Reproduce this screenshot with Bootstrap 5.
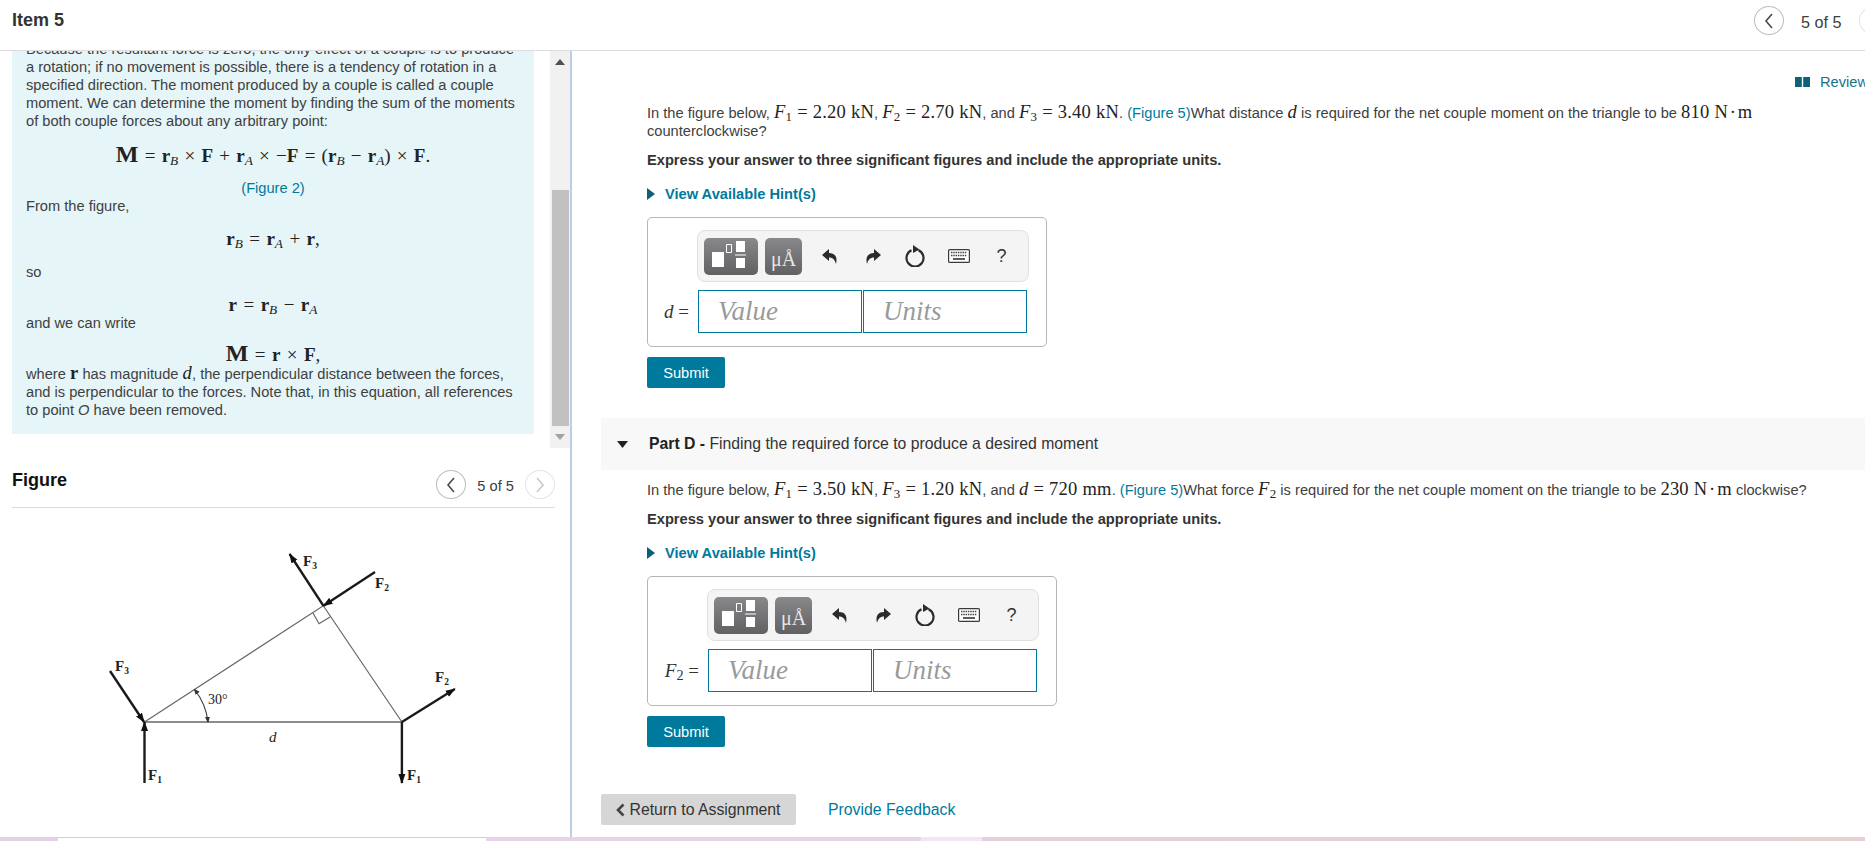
<!DOCTYPE html>
<html lang="en">
<head>
<meta charset="utf-8">
<title>Item 5</title>
<link href="https://cdn.jsdelivr.net/npm/bootstrap@5.3.0/dist/css/bootstrap.min.css" rel="stylesheet">
<style>
:root{--teal:#007a9c;}
html,body{height:100%;overflow:hidden;background:#fff;}
body{font-family:"Liberation Sans",Arial,sans-serif;font-size:14.65px;line-height:18px;color:#404040;}
a{color:var(--teal);text-decoration:none;}
.app-frame{width:1865px;height:841px;overflow:hidden;}
.top-bar{height:51px;border-bottom:1px solid #dcdcdc;padding-left:12px;}
.item-title{font-size:18px;font-weight:700;color:#333;line-height:40px;}
.pager-wrap{width:111px;padding-top:6px;flex:none;overflow:hidden;}
.round-btn{width:30px;height:29px;border:1px solid #bdbdbd;border-radius:50%;background:#fff;padding:0;display:flex;align-items:center;justify-content:center;flex:none;}
.round-btn.off{border-color:#e4e4e4;}
.count-main{font-size:16.2px;line-height:24px;margin:0 17px;white-space:nowrap;flex:none;}
.count-fig{font-size:14.65px;line-height:24px;margin:0 11px;white-space:nowrap;flex:none;}
.main-area{height:786px;}
.left-pane{width:572px;flex:none;border-right:2px solid #bccfe2;}
.scroll-area{height:397px;overflow:hidden;}
.scroll-content{width:550px;padding-left:12px;flex:none;}
.hint-box{width:522px;background:#e6f5f7;padding:0 14px 15px;margin-top:-11px;}
.hint-box p{margin:0;}
.eq{font-family:"Liberation Serif",serif;font-size:19px;word-spacing:1.700px;color:#222;display:flex;justify-content:center;white-space:nowrap;}
.eq-tall{height:49px;align-items:center;}
.eq-mid{height:48px;align-items:center;}
.eq-low{height:33px;align-items:flex-end;}
.eq-short{height:32px;align-items:flex-end;}
.eq-big{word-spacing:1.500px;}
.big-m{font-size:24px;font-weight:700;line-height:18px;}
.math{font-family:"Liberation Serif",serif;font-size:18.5px;line-height:1;word-spacing:.2px;letter-spacing:.2px;color:#222;white-space:nowrap;}
.math sub,.eq sub{font-size:70%;bottom:-.25em;}
.bar-track{width:20px;background:#f1f1f1;flex:none;}
.bar-end{height:22px;display:flex;align-items:center;justify-content:center;}
.bar-thumb{height:236px;background:#c1c1c1;margin:0 1px 0 2px;}
.fig-head{margin:18px 15px 0 12px;height:42px;border-bottom:1px solid #dcdcdc;}
.fig-title{font-size:18px;font-weight:700;color:#111;line-height:28px;}
.fig-svg{display:block;width:570px;height:329px;}
.fig-svg text{font-family:"Liberation Serif",serif;fill:#222;}
.right-pane{width:1293px;flex:none;overflow:hidden;}
.review-row{height:42px;padding:22px 0 0 1223px;width:1293px;}
.review-link{display:flex;gap:10px;align-items:center;color:#17708c;white-space:nowrap;width:100px;}
.q-block{padding-left:75px;width:1290px;}
.q-text{margin:10px 0 0;width:1210px;}
.q-bold{font-weight:700;color:#333;margin:11px 0 0;}
.hint-link{font-weight:700;display:flex;align-items:center;gap:10px;margin-top:16px;height:18px;color:var(--teal);}
.answer-card{border:1px solid #b5b5b5;border-radius:5px;background:#fff;margin-top:14px;height:130px;padding-top:12px;}
.card-a{width:400px;}
.card-b{width:410px;}
.tool-strip{height:52px;width:332px;background:#f4f4f4;border:1px solid #e0e0e0;border-radius:8px;display:flex;align-items:center;padding-left:6px;}
.card-a .tool-strip{margin-left:49px;}
.card-b .tool-strip{margin-left:59px;}
.tmpl-btn{height:37px;width:54px;border-radius:5px;background:linear-gradient(#88888b,#616164);display:flex;align-items:center;justify-content:center;flex:none;border:0;padding:0;}
.mu-btn{width:37px;margin:0 6px 0 7px;}
.mu-text{font-family:"Liberation Serif",serif;color:#e6e6e6;font-size:20px;line-height:1;padding-top:5px;}
.tool-icon{width:43px;display:flex;justify-content:center;align-items:center;flex:none;}
.tool-q{font-size:18px;color:#333;}
.entry-row{margin-top:8px;display:flex;align-items:center;}
.entry-label{font-family:"Liberation Serif",serif;font-size:19px;color:#333;text-align:right;flex:none;padding-right:9px;white-space:nowrap;}
.card-a .entry-label{width:50px;}
.card-b .entry-label{width:60px;}
.entry-box.form-control{width:164px;height:43px;border:1px solid var(--teal);border-radius:0;margin-right:1px;padding:0 0 0 19px;font-family:"Liberation Serif",serif;font-style:italic;font-size:27px;flex:none;}
.entry-box.form-control::placeholder{color:#9a9a9a;opacity:1;}
.send-btn{background:var(--teal);color:#fff;border:0;border-radius:2px;width:78px;height:31px;font-size:14.65px;padding:0;margin-top:10px;display:block;}
.part-head{height:52px;background:#f8f8f8;margin:30px 0 0 29px;padding-left:16px;gap:21px;font-size:15.75px;color:#333;width:1264px;}
.part-head b{color:#222;}
.foot-row{margin:47px 0 0 29px;gap:32px;}
.return-btn{width:195px;height:31px;background:#d6d6d6;color:#333;border-radius:2px;display:flex;align-items:center;justify-content:center;gap:4px;font-size:15.8px;}
.foot-link{font-size:15.8px;}
.bottom-strip{height:4px;display:flex;}
.strip-a{width:58px;background:#e3d2e6;}
.strip-b{width:428px;background:#fff;border-top:1px solid #cfcfcf;}
.strip-c{width:435px;background:#e6d3e8;}
.strip-d{width:61px;background:#f3e6f0;}
.strip-e{flex:1;background:linear-gradient(90deg,#e4d0dc,#e8d0d2);}
</style>
</head>
<body>
<div class="app-frame d-flex flex-column">
  <header class="top-bar d-flex justify-content-between">
    <div class="item-title">Item 5</div>
    <div class="pager-wrap d-flex align-items-start">
      <button class="round-btn" aria-label="Previous"><svg width="10" height="16" viewBox="0 0 10 16"><path d="M8 1 2 8l6 7" fill="none" stroke="#4a4a4a" stroke-width="1.6"/></svg></button>
      <span class="count-main mt-1">5 of 5</span>
      <button class="round-btn off" aria-label="Next"></button>
    </div>
  </header>
  <div class="main-area d-flex">
    <aside class="left-pane">
      <div class="scroll-area d-flex">
        <div class="scroll-content">
          <div class="hint-box">
            <p>Because the resultant force is zero, the only effect of a couple is to produce a rotation; if no movement is possible, there is a tendency of rotation in a specified direction. The moment produced by a couple is called a couple moment. We can determine the moment by finding the sum of the moments of both couple forces about any arbitrary point:</p>
            <div class="eq eq-big eq-tall"><span><span class="big-m">M</span> = <b>r</b><sub><i>B</i></sub> × <b>F</b> + <b>r</b><sub><i>A</i></sub> × −<b>F</b> = (<b>r</b><sub><i>B</i></sub> − <b>r</b><sub><i>A</i></sub>) × <b>F</b>.</span></div>
            <p class="text-center"><a href="#">(Figure 2)</a></p>
            <p>From the figure,</p>
            <div class="eq eq-mid"><span><b>r</b><sub><i>B</i></sub> = <b>r</b><sub><i>A</i></sub> + <b>r</b>,</span></div>
            <p>so</p>
            <div class="eq eq-low"><span><b>r</b> = <b>r</b><sub><i>B</i></sub> − <b>r</b><sub><i>A</i></sub></span></div>
            <p>and we can write</p>
            <div class="eq eq-short"><span><span class="big-m">M</span> = <b>r</b> × <b>F</b>,</span></div>
            <p>where <b class="math">r</b> has magnitude <i class="math">d</i>, the perpendicular distance between the forces, and is perpendicular to the forces. Note that, in this equation, all references to point <i>O</i> have been removed.</p>
          </div>
        </div>
        <div class="bar-track d-flex flex-column">
          <div class="bar-end"><svg width="10" height="6" viewBox="0 0 10 6"><path d="M5 0l5 6H0z" fill="#505050"/></svg></div>
          <div class="flex-grow-1"></div>
          <div class="bar-thumb"></div>
          <div class="bar-end"><svg width="10" height="6" viewBox="0 0 10 6"><path d="M5 6 0 0h10z" fill="#a3a3a3"/></svg></div>
        </div>
      </div>
      <div class="fig-head d-flex justify-content-between">
        <div class="fig-title">Figure</div>
        <div class="d-flex align-items-start pt-1">
          <button class="round-btn" aria-label="Previous figure"><svg width="10" height="16" viewBox="0 0 10 16"><path d="M8 1 2 8l6 7" fill="none" stroke="#4a4a4a" stroke-width="1.6"/></svg></button>
          <span class="count-fig mt-1">5 of 5</span>
          <button class="round-btn off" aria-label="Next figure"><svg width="10" height="16" viewBox="0 0 10 16"><path d="M2 1l6 7-6 7" fill="none" stroke="#c8c8c8" stroke-width="1.6"/></svg></button>
        </div>
      </div>
      <svg class="fig-svg" viewBox="0 508 570 329" role="img" aria-label="Triangle with couple forces">
        <defs>
          <marker id="tip" markerWidth="10" markerHeight="8" refX="9" refY="4" orient="auto" markerUnits="userSpaceOnUse"><path d="M0 .5 10 4 0 7.5z" fill="#111"/></marker>
          <marker id="tip2" markerWidth="6" markerHeight="6" refX="5" refY="3" orient="auto-start-reverse" markerUnits="userSpaceOnUse"><path d="M0 .5 6 3 0 5.5z" fill="#333"/></marker>
        </defs>
        <g fill="none" stroke="#666" stroke-width="1.2">
          <path d="M144.5 722 323.3 605.7 401.9 722"/>
          <path d="M144.5 722H401.9" stroke-width="1.7"/>
          <path d="M313 613 319 623.7 330 617"/>
          <path d="M194.5 689.5Q206 704 208 722" stroke="#444" marker-start="url(#tip2)" marker-end="url(#tip2)"/>
        </g>
        <g fill="none" stroke="#1a1a1a" stroke-width="2.4">
          <path d="M144.5 783V722" marker-end="url(#tip)"/>
          <path d="M401.9 722V783" marker-end="url(#tip)"/>
          <path d="M110 671 144 722" marker-end="url(#tip)"/>
          <path d="M323.3 605.7 289.6 554" marker-end="url(#tip)"/>
          <path d="M375 572 323.5 605.7" marker-end="url(#tip)"/>
          <path d="M401.9 722 454.8 689" marker-end="url(#tip)"/>
        </g>
        <g font-size="15">
          <text x="115" y="671" font-weight="700">F<tspan font-size="9.5" dy="3">3</tspan></text>
          <text x="303" y="566" font-weight="700">F<tspan font-size="9.5" dy="3">3</tspan></text>
          <text x="375" y="588" font-weight="700">F<tspan font-size="9.5" dy="3">2</tspan></text>
          <text x="435" y="682" font-weight="700">F<tspan font-size="9.5" dy="3">2</tspan></text>
          <text x="148" y="780" font-weight="700">F<tspan font-size="9.5" dy="3">1</tspan></text>
          <text x="407" y="780" font-weight="700">F<tspan font-size="9.5" dy="3">1</tspan></text>
          <text x="208" y="704" font-size="14">30°</text>
          <text x="269" y="742" font-style="italic">d</text>
        </g>
      </svg>
    </aside>
    <main class="right-pane">
      <div class="review-row"><a href="#" class="review-link"><svg width="15" height="10" viewBox="0 0 15 10"><path d="M0 0h6.8v10H0zM8.2 0H15v10H8.2z" fill="#0f6178"/></svg>Review</a></div>
      <div class="q-block">
        <p class="q-text">In the figure below, <span class="math"><i>F</i><sub>1</sub> = 2.20 kN</span>, <span class="math"><i>F</i><sub>2</sub> = 2.70 kN</span>, and <span class="math"><i>F</i><sub>3</sub> = 3.40 kN</span>. <a href="#">(Figure 5)</a>What distance <i class="math">d</i> is required for the net couple moment on the triangle to be <span class="math">810 N&#8202;·&#8202;m</span> counterclockwise?</p>
        <p class="q-bold">Express your answer to three significant figures and include the appropriate units.</p>
        <a href="#" class="hint-link"><svg width="8" height="12" viewBox="0 0 8 12"><path d="M0 0l8 6-8 6z" fill="#0a5f79"/></svg>View Available Hint(s)</a>
        <div class="answer-card card-a">
          <div class="tool-strip">
            <button class="tmpl-btn" aria-label="Templates"><svg width="54" height="37" viewBox="0 0 54 37"><path d="M8 14h12v15H8zM32 3h9v11h-9zM32 20h9v10h-9zM31 16.500h11v1H31z" fill="#fff"/><path d="M22.500 6.500h5v8h-5z" fill="none" stroke="#fff"/></svg></button>
            <button class="tmpl-btn mu-btn"><span class="mu-text">μÅ</span></button>
            <span class="tool-icon"><svg width="18" height="17" viewBox="0 0 18 17"><path d="M1 7 8 1v4c5 0 9 3 7 11-1-4-3-6.500-7-6.500V13z" fill="#2b2b2b"/></svg></span>
            <span class="tool-icon"><svg width="18" height="17" viewBox="0 0 18 17"><path d="M17 7 10 1v4C5 5 1 8 3 16c1-4 3-6.500 7-6.500V13z" fill="#2b2b2b"/></svg></span>
            <span class="tool-icon"><svg width="21" height="22" viewBox="0 0 21 22"><path d="M6.500 5.300a8.500 8.500 0 1 0 7 0" fill="none" stroke="#2b2b2b" stroke-width="2.200"/><path d="M8 0l6.500 4.500L8 8z" fill="#2b2b2b"/></svg></span>
            <span class="tool-icon"><svg width="22" height="14" viewBox="0 0 22 14"><rect x=".6" y=".6" width="20.800" height="12.800" rx="1" fill="#fff" stroke="#3a3a3a" stroke-width="1.200"/><path d="M3 3.500h16M3 6.500h16" stroke="#444" stroke-width="1.500" stroke-dasharray="1.500 .8"/><path d="M5 10h12" stroke="#333" stroke-width="1.600"/></svg></span>
            <span class="tool-icon tool-q">?</span>
          </div>
          <div class="entry-row">
            <span class="entry-label"><i>d</i> =</span>
            <input class="form-control entry-box" placeholder="Value" aria-label="Value">
            <input class="form-control entry-box" placeholder="Units" aria-label="Units">
          </div>
        </div>
        <button class="send-btn">Submit</button>
      </div>
      <div class="part-head d-flex align-items-center">
        <svg width="11" height="7" viewBox="0 0 11 7"><path d="M0 0h11L5.500 7z" fill="#222"/></svg>
        <span><b>Part D - </b>Finding the required force to produce a desired moment</span>
      </div>
      <div class="q-block">
        <p class="q-text">In the figure below, <span class="math"><i>F</i><sub>1</sub> = 3.50 kN</span>, <span class="math"><i>F</i><sub>3</sub> = 1.20 kN</span>, and <span class="math"><i>d</i> = 720 mm</span>. <a href="#">(Figure 5)</a>What force <span class="math"><i>F</i><sub>2</sub></span> is required for the net couple moment on the triangle to be <span class="math">230 N&#8202;·&#8202;m</span> clockwise?</p>
        <p class="q-bold">Express your answer to three significant figures and include the appropriate units.</p>
        <a href="#" class="hint-link"><svg width="8" height="12" viewBox="0 0 8 12"><path d="M0 0l8 6-8 6z" fill="#0a5f79"/></svg>View Available Hint(s)</a>
        <div class="answer-card card-b">
          <div class="tool-strip">
            <button class="tmpl-btn" aria-label="Templates"><svg width="54" height="37" viewBox="0 0 54 37"><path d="M8 14h12v15H8zM32 3h9v11h-9zM32 20h9v10h-9zM31 16.500h11v1H31z" fill="#fff"/><path d="M22.500 6.500h5v8h-5z" fill="none" stroke="#fff"/></svg></button>
            <button class="tmpl-btn mu-btn"><span class="mu-text">μÅ</span></button>
            <span class="tool-icon"><svg width="18" height="17" viewBox="0 0 18 17"><path d="M1 7 8 1v4c5 0 9 3 7 11-1-4-3-6.500-7-6.500V13z" fill="#2b2b2b"/></svg></span>
            <span class="tool-icon"><svg width="18" height="17" viewBox="0 0 18 17"><path d="M17 7 10 1v4C5 5 1 8 3 16c1-4 3-6.500 7-6.500V13z" fill="#2b2b2b"/></svg></span>
            <span class="tool-icon"><svg width="21" height="22" viewBox="0 0 21 22"><path d="M6.500 5.300a8.500 8.500 0 1 0 7 0" fill="none" stroke="#2b2b2b" stroke-width="2.200"/><path d="M8 0l6.500 4.500L8 8z" fill="#2b2b2b"/></svg></span>
            <span class="tool-icon"><svg width="22" height="14" viewBox="0 0 22 14"><rect x=".6" y=".6" width="20.800" height="12.800" rx="1" fill="#fff" stroke="#3a3a3a" stroke-width="1.200"/><path d="M3 3.500h16M3 6.500h16" stroke="#444" stroke-width="1.500" stroke-dasharray="1.500 .8"/><path d="M5 10h12" stroke="#333" stroke-width="1.600"/></svg></span>
            <span class="tool-icon tool-q">?</span>
          </div>
          <div class="entry-row">
            <span class="entry-label"><i>F</i><sub>2</sub> =</span>
            <input class="form-control entry-box" placeholder="Value" aria-label="Value">
            <input class="form-control entry-box" placeholder="Units" aria-label="Units">
          </div>
        </div>
        <button class="send-btn">Submit</button>
      </div>
      <div class="foot-row d-flex align-items-center">
        <a href="#" class="return-btn"><svg width="9" height="14" viewBox="0 0 9 14"><path d="M7.500 1.500 2 7l5.500 5.500" fill="none" stroke="#444" stroke-width="2.600"/></svg>Return to Assignment</a>
        <a href="#" class="foot-link">Provide Feedback</a>
      </div>
    </main>
  </div>
  <div class="bottom-strip"><div class="strip-a"></div><div class="strip-b"></div><div class="strip-c"></div><div class="strip-d"></div><div class="strip-e"></div></div>
</div>
</body>
</html>
